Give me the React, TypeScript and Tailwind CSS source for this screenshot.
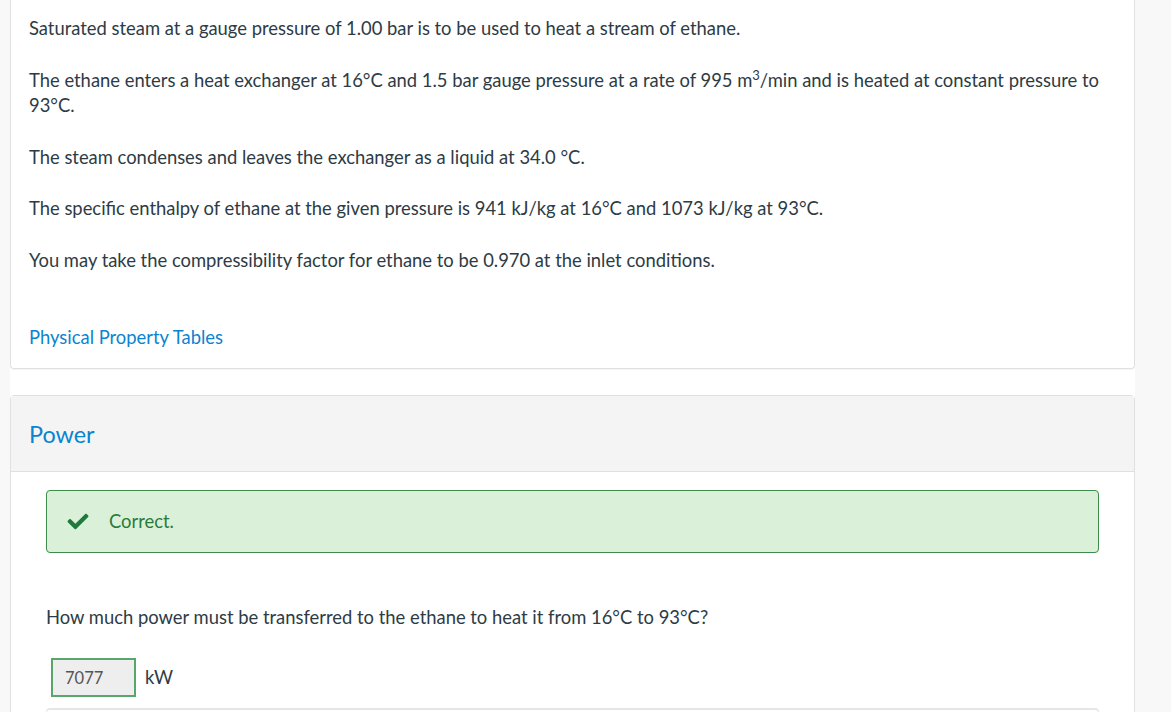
import React from "react";

function CheckIcon() {
  return (
    <svg viewBox="0 0 512 512" className="w-[26px] h-[21px] fill-[#1e7a3c]">
      <path d="M173.898 439.404l-166.4-166.4c-9.997-9.997-9.997-26.206 0-36.204l36.203-36.204c9.997-9.998 26.207-9.998 36.204 0L192 312.69 432.095 72.596c9.997-9.997 26.207-9.997 36.204 0l36.203 36.204c9.997 9.997 9.997 26.206 0 36.204l-294.4 294.401c-9.998 9.997-26.207 9.997-36.204-.001z" />
    </svg>
  );
}

const paragraphs = [
  "Saturated steam at a gauge pressure of 1.00 bar is to be used to heat a stream of ethane.",
  null,
  "The steam condenses and leaves the exchanger as a liquid at 34.0 °C.",
  "The specific enthalpy of ethane at the given pressure is 941 kJ/kg at 16°C and 1073 kJ/kg at 93°C.",
  "You may take the compressibility factor for ethane to be 0.970 at the inlet conditions.",
];

export default function App() {
  return (
    <div className="min-h-[712px] bg-[#f8f8f8] font-['Lato','Noto_Sans',sans-serif] text-[18.4px] leading-[25.5px] text-[#2d3b45]">
      <div className="ml-[10px] w-[1125px] bg-white min-h-[712px] overflow-hidden">
        {/* question card */}
        <div className="border-x border-b border-[#e0e0e0] rounded-b-[4px] px-[18px] pt-[16px] pb-[17px] shadow-[0_1px_1px_rgba(0,0,0,0.04)]">
          {paragraphs.map((p, i) =>
            p ? (
              <p key={i} className="mb-[26px]">{p}</p>
            ) : (
              <p key={i} className="mb-[26px] pr-[10px]">
                The ethane enters a heat exchanger at 16°C and 1.5 bar gauge pressure at a rate of 995 m
                <sup className="text-[13px] leading-none -top-[7px]">3</sup>/min and is heated at constant pressure to 93°C.
              </p>
            )
          )}
          <p className="mt-[52px] text-[#0a84d0]">Physical Property Tables</p>
        </div>

        {/* part card */}
        <div className="mt-[26px] border border-[#e0e0e0] rounded-t-[4px]">
          <div className="bg-[#f4f4f4] border-b border-[#e0e0e0] h-[76px] flex items-center px-[18px] pt-[4px]">
            <h2 className="text-[23.4px] text-[#0a84d0]">Power</h2>
          </div>
          <div className="px-[35px] pt-[18px]">
            <div className="h-[63px] bg-[#dbf0d8] border border-[#3d8c4d] rounded-[4px] flex items-center pl-[18px] gap-[18px]">
              <CheckIcon />
              <span className="text-[#2a7b3b] pt-[2px]">Correct.</span>
            </div>
            <p className="mt-[52px]">How much power must be transferred to the ethane to heat it from 16°C to 93°C?</p>
            <div className="mt-[28px] flex items-center gap-[9px] pl-[5px]">
              <div className="w-[85px] h-[39px] bg-[#eeeeee] border-2 border-[#5aa66a] flex items-center pl-[12px] pt-[2px] text-[16.5px] text-[#555]">
                7077
              </div>
              <span className="text-[#2d3b45]">kW</span>
            </div>
            <div className="mt-[11px] h-[10px] border-t-2 border-x border-[#e6e6e6] rounded-t-[4px]" />
          </div>
        </div>
      </div>
    </div>
  );
}
